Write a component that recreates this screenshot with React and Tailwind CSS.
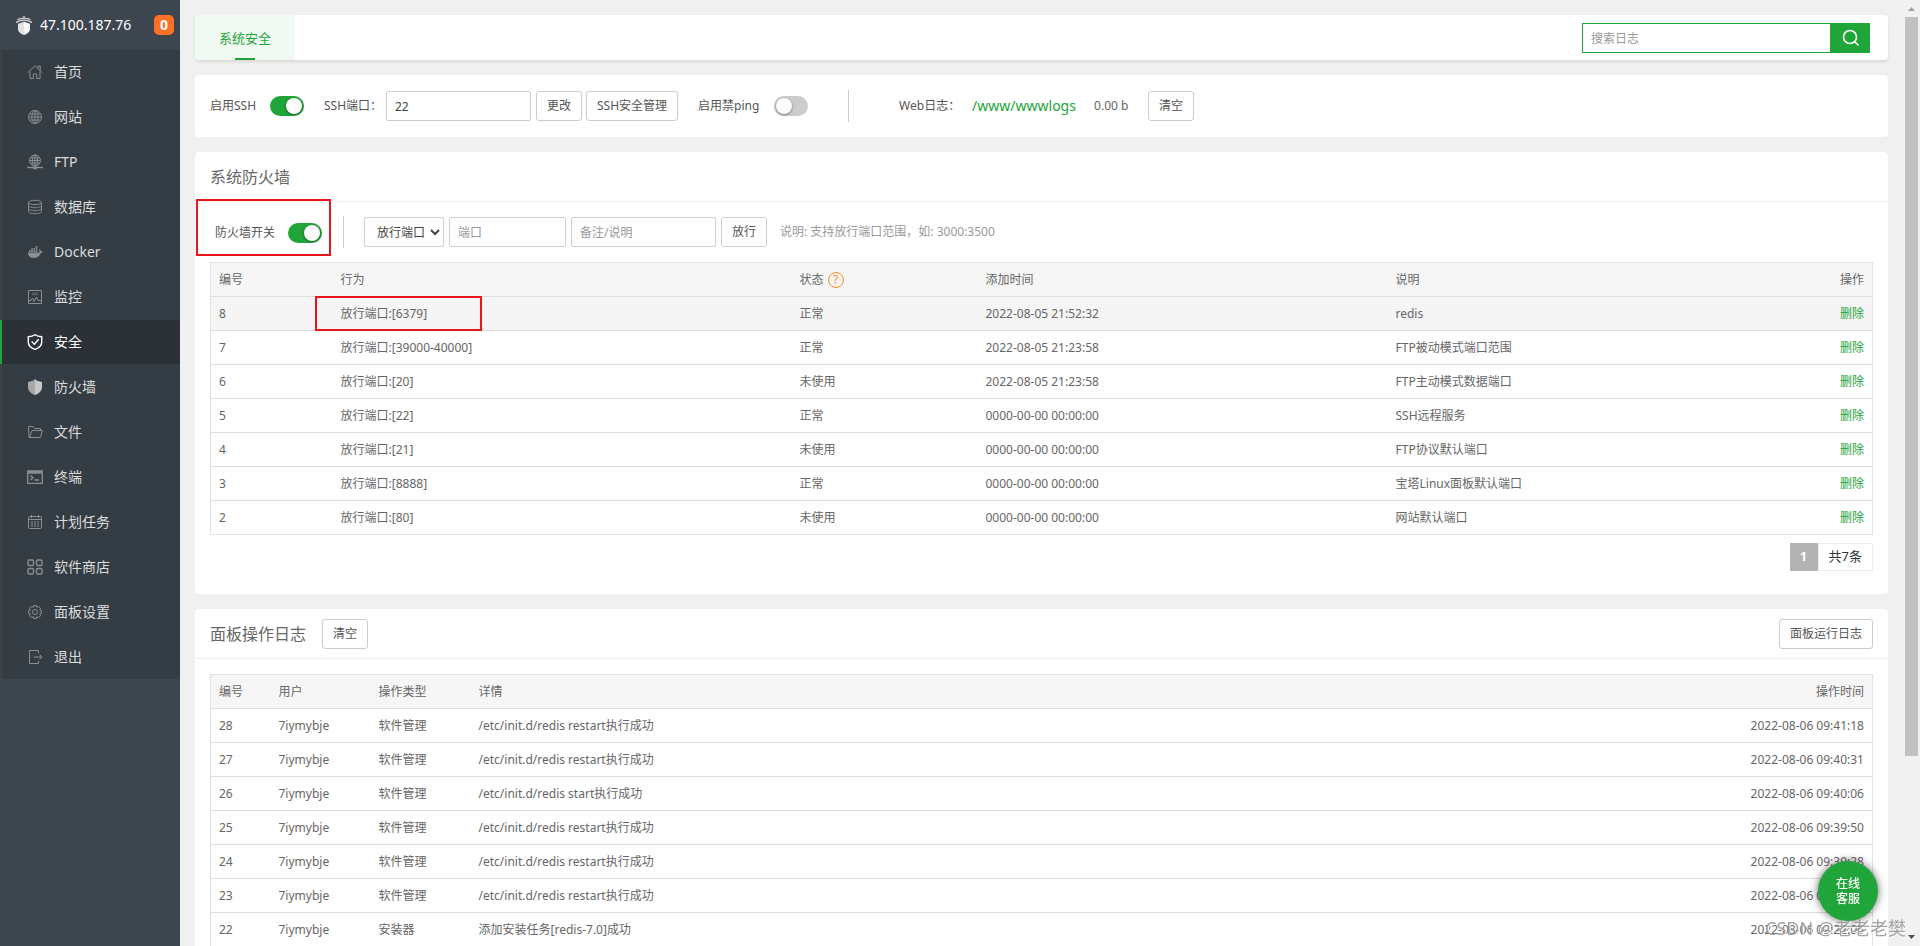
import React, { useState } from "react";
import clsx from "clsx";

const ICONS = {
	home: (
		<g fill="none" stroke="currentColor">
			<path d="M.8 8.700 8 1.800 15.200 8.700M11 4V2H13.200V6.500" />
			<path d="M3 7.500V14.500H6.300V10H9.700V14.500H13V7.500" />
		</g>
	),
	site: (
		<g fill="none" stroke="currentColor">
			<circle cx="8" cy="8" r="6.5" />
			<ellipse cx="8" cy="8" rx="3.2" ry="6.5" />
			<path d="M8 1.500V14.500M1.500 8H14.500M2.500 5H13.500M2.500 11H13.500" />
		</g>
	),
	ftp: (
		<g fill="none" stroke="currentColor">
			<circle cx="8" cy="6.5" r="5.5" />
			<ellipse cx="8" cy="6.5" rx="2.700" ry="5.5" />
			<path d="M8 1V12M2.500 6.500H13.500M3.500 4H12.500M3.500 9H12.500" />
			<path d="M0 13.500H16" strokeWidth="1.400" />
			<path d="M6 14H10" strokeWidth="2.500" />
		</g>
	),
	database: (
		<g fill="none" stroke="currentColor">
			<ellipse cx="8" cy="3.500" rx="6.500" ry="2.200" />
			<path d="M1.500 3.500V12.500C1.500 13.700 4.400 14.700 8 14.700S14.500 13.700 14.500 12.500V3.500" />
			<path d="M1.500 6.500C1.500 7.700 4.400 8.700 8 8.700S14.500 7.700 14.500 6.500M1.500 9.500C1.500 10.700 4.400 11.700 8 11.700S14.500 10.700 14.500 9.500" />
		</g>
	),
	docker: (
		<g fill="currentColor">
			<path d="M1 8.500H12.500C12.800 7.500 12.500 6.800 12 6l.8-.8c.8.6 1.100 1.200 1.200 2 .7-.1 1.500 0 2 .4-.4.9-1.200 1.300-2.200 1.300C12.600 12.300 10.300 14 6.800 14 3 14 .8 12.200 1 8.500Z" />
			<path d="M2 6.300h1.700V8H2zM4.200 6.300h1.700V8H4.200zM6.400 6.300h1.700V8H6.400zM8.600 6.300h1.700V8H8.600zM4.200 4.200h1.700v1.600H4.200zM6.400 4.200h1.700v1.600H6.400zM8.600 4.200h1.700v1.600H8.600zM8.600 2h1.700v1.700H8.600z" />
		</g>
	),
	monitor: (
		<g fill="none" stroke="currentColor">
			<path d="M1.500 1.500H14.500V14.500H1.500Z" />
			<path d="M5 4H11M5 5.500H11" strokeOpacity="0.5" />
			<path d="M2 11.500H4L5.500 9 7 12.500 9.500 8 11 11.500H14" />
		</g>
	),
	safe: (
		<g fill="none" stroke="currentColor" strokeWidth="1.4">
			<path d="M8 .8C6 2.300 3.800 2.700 1.300 2.700V8C1.300 11.800 4 14 8 15.400 12 14 14.700 11.800 14.700 8V2.700C12.200 2.700 10 2.300 8 .8Z" />
			<path d="M4.700 7.500 7.300 10.200 11.700 5.300" />
		</g>
	),
	waf: (
		<>
			<path fill="#a7a8a8" d="M8 0 6 1.800 1 3V8.500C1.200 12 4 14.500 8 16Z" />
			<path fill="#c8c9c9" d="M8 0 10 1.800 15 3V8.500C14.800 12 12 14.500 8 16Z" />
		</>
	),
	files: (
		<g fill="none" stroke="currentColor">
			<path d="M2 13.500 1.500 2.500H6L7.500 4.500H13.500V6" />
			<path d="M2 13.500H13.500L15.300 6.500H5L2.500 13.500" />
		</g>
	),
	terminal: (
		<>
			<path d="M.7 2H15.300V14.300H.7Z" fill="none" stroke="currentColor" strokeWidth="1.300" />
			<path d="M1 2H15V4.700H1Z" fill="currentColor" />
			<path d="M3.500 6.500 6 8.700 3.500 11M7.500 11H12" fill="none" stroke="currentColor" strokeWidth="1.300" />
		</>
	),
	cron: (
		<g fill="none" stroke="currentColor">
			<rect x="1.500" y="2.500" width="13" height="12" rx="1" />
			<path d="M1.500 5.500H14.500M4.500 1V4M11.500 1V4" />
			<path d="M4 8H12M4 10H12M4 12H12" strokeDasharray="2 1" />
		</g>
	),
	store: (
		<g fill="none" stroke="currentColor" strokeWidth="1.400">
			<rect x="1" y="1" width="5.500" height="5.500" rx="1.200" />
			<rect x="9.500" y="1" width="5.500" height="5.500" rx="1.200" />
			<rect x="1" y="9.500" width="5.500" height="5.500" rx="1.200" />
			<rect x="9.500" y="9.500" width="5.500" height="5.500" rx="1.200" />
		</g>
	),
	config: (
		<g fill="none" stroke="currentColor">
			<path d="M6.800 1.500h2.400l.5 1.700 2.100-.7 1.700 1.700-.7 2.100 1.700.5v2.400l-1.700.5.7 2.100-1.700 1.700-2.100-.7-.5 1.700H6.800l-.5-1.700-2.100.7-1.700-1.700.7-2.100-1.700-.5V6.800l1.700-.5-.7-2.100 1.700-1.700 2.100.7Z" />
			<circle cx="8" cy="8" r="2.500" />
		</g>
	),
	exit: (
		<g fill="none" stroke="currentColor">
			<path d="M11.500 4V1.500H2.500V14.500H11.500V12" />
			<path d="M7 8H15M12.500 5.500 15 8 12.500 10.500" />
		</g>
	),
};

const MENU = [
	{ icon: "home", label: "首页" },
	{ icon: "site", label: "网站" },
	{ icon: "ftp", label: "FTP" },
	{ icon: "database", label: "数据库" },
	{ icon: "docker", label: "Docker" },
	{ icon: "monitor", label: "监控" },
	{ icon: "safe", label: "安全", active: true },
	{ icon: "waf", label: "防火墙" },
	{ icon: "files", label: "文件" },
	{ icon: "terminal", label: "终端" },
	{ icon: "cron", label: "计划任务" },
	{ icon: "store", label: "软件商店" },
	{ icon: "config", label: "面板设置" },
	{ icon: "exit", label: "退出" },
];

const RULES = [
	{ id: 8, port: "6379", status: "正常", time: "2022-08-05 21:52:32", ps: "redis", marked: true },
	{ id: 7, port: "39000-40000", status: "正常", time: "2022-08-05 21:23:58", ps: "FTP被动模式端口范围" },
	{ id: 6, port: "20", status: "未使用", time: "2022-08-05 21:23:58", ps: "FTP主动模式数据端口" },
	{ id: 5, port: "22", status: "正常", time: "0000-00-00 00:00:00", ps: "SSH远程服务" },
	{ id: 4, port: "21", status: "未使用", time: "0000-00-00 00:00:00", ps: "FTP协议默认端口" },
	{ id: 3, port: "8888", status: "正常", time: "0000-00-00 00:00:00", ps: "宝塔Linux面板默认端口" },
	{ id: 2, port: "80", status: "未使用", time: "0000-00-00 00:00:00", ps: "网站默认端口" },
];

const LOGS = [
	{ id: 28, type: "软件管理", text: "/etc/init.d/redis restart执行成功", time: "2022-08-06 09:41:18" },
	{ id: 27, type: "软件管理", text: "/etc/init.d/redis restart执行成功", time: "2022-08-06 09:40:31" },
	{ id: 26, type: "软件管理", text: "/etc/init.d/redis start执行成功", time: "2022-08-06 09:40:06" },
	{ id: 25, type: "软件管理", text: "/etc/init.d/redis restart执行成功", time: "2022-08-06 09:39:50" },
	{ id: 24, type: "软件管理", text: "/etc/init.d/redis restart执行成功", time: "2022-08-06 09:39:28" },
	{ id: 23, type: "软件管理", text: "/etc/init.d/redis restart执行成功", time: "2022-08-06 09:39:14" },
	{ id: 22, type: "安装器", text: "添加安装任务[redis-7.0]成功", time: "2022-08-06 09:22:05" },
];

function Sidebar() {
	return (
		<aside className="w-[180px] shrink-0 bg-[#3d454f]">
			<div className="flex h-[50px] items-center pr-1.5 pl-4 text-white">
				<svg className="h-[19px] w-4" viewBox="0 0 16 19">
					<path d="M8 0V2M1.500 3.700C4.500 1.700 11.500 1.700 14.500 3.700M0 6.500C4 3.500 12 3.500 16 6.500" fill="none" stroke="#c5c7c9" strokeWidth="1.600" />
					<path fill="#e2e3e4" d="M8 5.700 2 7.700V14C2.800 16.500 5.500 18.500 8 19Z" />
					<path fill="#f6f6f6" d="M8 5.700 14 7.700V14C13.200 16.500 10.500 18.500 8 19Z" />
				</svg>
				<span className="ml-2 text-sm">47.100.187.76</span>
				<span className="ml-auto flex size-5 items-center justify-center rounded-[5px] bg-[#ff6f26] text-sm font-bold">
					0
				</span>
			</div>
			<nav className="bg-[#353d44]">
				{MENU.map(({ icon, label, active }) => (
					<a
						key={icon}
						href={`#${icon}`}
						className={clsx(
							"mb-px flex h-11 items-center border-l-2 pl-[25px] text-sm",
							active
								? "border-[#20a53a] bg-[#2c3138] text-white"
								: "border-[#444240] text-[#dcdcdc]"
						)}
					>
						<svg
							className={clsx("size-4", active ? "text-white" : "text-[#8b8f92]")}
							viewBox="0 0 16 16"
						>
							{ICONS[icon]}
						</svg>
						<span className="ml-[11px]">{label}</span>
					</a>
				))}
			</nav>
		</aside>
	);
}

function Switch({ id, defaultChecked }) {
	return (
		<input
			id={id}
			type="checkbox"
			role="switch"
			defaultChecked={defaultChecked}
			className="h-5 w-[34px] shrink-0 appearance-none rounded-full bg-[#ccc] p-0.5 before:block before:size-4 before:rounded-full before:bg-[#fcfcfc] before:shadow-[0_1px_3px_rgba(0,0,0,0.4)] checked:bg-[#20a53a] checked:before:ml-auto"
		/>
	);
}

function Button({ className, children }) {
	return (
		<button
			type="button"
			className={clsx(
				"h-[30px] shrink-0 rounded-[3px] border border-[#ccc] bg-white px-2.5 text-xs text-[#555]",
				className
			)}
		>
			{children}
		</button>
	);
}

function TextField({ className, ...props }) {
	return (
		<input
			type="text"
			className={clsx(
				"h-[30px] rounded-xs border border-[#ccc] px-2 text-xs text-[#444] placeholder:text-[#999]",
				className
			)}
			{...props}
		/>
	);
}

function Topbar() {
	return (
		<div className="flex h-[45px] items-center justify-between rounded bg-white pr-[18px] shadow-[0_2px_3px_rgba(0,0,0,0.1)]">
			<a
				href="#safe"
				className="flex h-full w-[100px] flex-col items-center rounded-l bg-[#f1f9f3] text-[13px] text-[#20a53a]"
			>
				<span className="flex flex-1 items-center pt-1">系统安全</span>
				<span className="h-0.5 w-5 bg-[#20a53a]" />
			</a>
			<form className="flex h-[30px]">
				<input
					type="text"
					aria-label="搜索日志"
					placeholder="搜索日志"
					className="w-[249px] border border-[#20a53a] px-2 pt-0.5 text-xs placeholder:text-[#999]"
				/>
				<button
					type="button"
					aria-label="搜索"
					className="flex w-[39px] items-center justify-center bg-[#20a53a] text-white"
				>
					<svg className="size-[18px]" viewBox="0 0 18 18" fill="none" stroke="currentColor" strokeWidth="1.600">
						<circle cx="8" cy="8" r="6.500" />
						<path d="M12.500 12.500 16.500 16.500" />
					</svg>
				</button>
			</form>
		</div>
	);
}

function SshPanel() {
	return (
		<section className="mt-[15px] flex h-[62px] items-center rounded bg-white px-[15px]">
			<label htmlFor="ssh" className="w-[60px]">
				启用SSH
			</label>
			<Switch id="ssh" defaultChecked />
			<label htmlFor="ssh-port" className="ml-5 w-[62px]">
				SSH端口：
			</label>
			<TextField id="ssh-port" defaultValue="22" className="w-[145px]" />
			<Button className="ml-[5px]">更改</Button>
			<Button className="ml-1">SSH安全管理</Button>
			<label htmlFor="ping" className="ml-5 w-[76px]">
				启用禁ping
			</label>
			<Switch id="ping" />
			<span className="ml-10 h-8 w-px bg-[#ccc]" />
			<span className="ml-[50px] w-[73px]">Web日志：</span>
			<a href="#wwwlogs" className="w-[107px] text-sm text-[#20a53a]">
				/www/wwwlogs
			</a>
			<span className="ml-[15px] w-[35px] text-[#666]">0.00 b</span>
			<Button className="ml-[19px]">清空</Button>
		</section>
	);
}

function FirewallPanel() {
	const [page] = useState(1);
	return (
		<section className="mt-[15px] rounded bg-white pb-[23px]">
			<h2 className="flex h-[50px] items-center border-b border-[#eee] px-[15px] text-base text-[#666]">
				系统防火墙
			</h2>
			<div className="flex h-[60px] items-center pl-px">
				<div className="-mt-[3px] flex h-[57px] w-[135px] items-center self-start border-2 border-[#e8151c] pt-[11px] pl-[17px]">
					<label htmlFor="firewall" className="w-[73px]">
						防火墙开关
					</label>
					<Switch id="firewall" defaultChecked />
				</div>
				<span className="ml-3 h-8 w-px bg-[#ccc]" />
				<select
					aria-label="类型"
					className="ml-5 h-[30px] w-20 rounded-xs border border-[#ccc] bg-white pl-2 text-xs text-[#444]"
				>
					<option>放行端口</option>
					<option>屏蔽IP</option>
				</select>
				<TextField aria-label="端口" placeholder="端口" className="ml-[5px] w-[117px]" />
				<TextField aria-label="备注/说明" placeholder="备注/说明" className="ml-[5px] w-[145px]" />
				<Button className="ml-[5px]">放行</Button>
				<span className="ml-[13px] text-[#999]">说明: 支持放行端口范围，如: 3000:3500</span>
			</div>
			<div className="px-[15px]">
				<table className="w-full table-fixed border-collapse border border-[#e3e3e3] text-left text-[#666]">
					<thead>
						<tr className="h-[34px] bg-[#f6f6f6]">
							<th className="w-[122px] px-2 font-normal">编号</th>
							<th className="px-2 font-normal">行为</th>
							<th className="w-[186px] px-2 font-normal">
								<span className="flex items-center gap-1">
									状态
									<a
										href="#help"
										className="flex size-4 items-center justify-center rounded-full border border-[#ff8a1c] text-xs text-[#ff8a1c]"
									>
										?
									</a>
								</span>
							</th>
							<th className="w-[410px] px-2 font-normal">添加时间</th>
							<th className="w-[410px] px-2 font-normal">说明</th>
							<th className="w-[75px] px-2 text-right font-normal">操作</th>
						</tr>
					</thead>
					<tbody>
						{RULES.map((rule) => (
							<tr
								key={rule.id}
								className={clsx("h-[34px] border-t border-[#ddd]", rule.marked && "bg-[#f5f5f5]")}
							>
								<td className="px-2">{rule.id}</td>
								<td className="relative px-2">
									{rule.marked && (
										<span className="absolute -top-px -left-[18px] h-[35px] w-[167px] border-2 border-[#e8151c]" />
									)}
									放行端口:[{rule.port}]
								</td>
								<td className="px-2">{rule.status}</td>
								<td className="px-2">{rule.time}</td>
								<td className="px-2">{rule.ps}</td>
								<td className="px-2 text-right">
									<a href="#del" className="text-[#20a53a]">
										删除
									</a>
								</td>
							</tr>
						))}
					</tbody>
				</table>
				<div className="mt-2 flex justify-end text-[13px] text-[#333]">
					<span className="flex size-7 items-center justify-center bg-[#b3b3b3] font-bold text-white">
						{page}
					</span>
					<span className="flex h-7 items-center border border-[#ececec] px-2.5">
						共{RULES.length}条
					</span>
				</div>
			</div>
		</section>
	);
}

function LogPanel() {
	return (
		<section className="mt-[15px] rounded bg-white">
			<div className="flex h-[50px] items-center border-b border-[#eee] px-[15px]">
				<h2 className="text-base text-[#666]">面板操作日志</h2>
				<Button className="ml-4">清空</Button>
				<Button className="ml-auto">面板运行日志</Button>
			</div>
			<div className="p-[15px]">
				<table className="w-full table-fixed border-collapse border border-[#e3e3e3] text-left text-[#666]">
					<thead>
						<tr className="h-[34px] bg-[#f6f6f6]">
							<th className="w-[60px] px-2 font-normal">编号</th>
							<th className="w-[100px] px-2 font-normal">用户</th>
							<th className="w-[100px] px-2 font-normal">操作类型</th>
							<th className="px-2 font-normal">详情</th>
							<th className="w-[160px] px-2 text-right font-normal">操作时间</th>
						</tr>
					</thead>
					<tbody>
						{LOGS.map((log) => (
							<tr key={log.id} className="h-[34px] border-t border-[#ddd]">
								<td className="px-2">{log.id}</td>
								<td className="px-2">7iymybje</td>
								<td className="px-2">{log.type}</td>
								<td className="px-2">{log.text}</td>
								<td className="px-2 text-right">{log.time}</td>
							</tr>
						))}
					</tbody>
				</table>
			</div>
		</section>
	);
}

// classic page scrollbar: arrow, thumb, arrow
function Scrollbar() {
	return (
		<div className="flex w-[17px] shrink-0 flex-col items-center bg-[#f1f1f1]">
			<svg className="h-[17px] w-[17px]" viewBox="0 0 17 17">
				<path d="M5 11H12L8.500 7Z" fill="#a3a3a3" />
			</svg>
			<div className="flex w-full flex-1 flex-col px-0.5">
				<span className="h-[81%] bg-[#c1c1c1]" />
			</div>
			<svg className="h-[17px] w-[17px]" viewBox="0 0 17 17">
				<path d="M5 6H12L8.500 10Z" fill="#505050" />
			</svg>
		</div>
	);
}

export default function App() {
	return (
		<div className="flex h-screen overflow-hidden bg-[#f0f0f0] font-['Noto_Sans','Noto_Sans_CJK_SC',sans-serif] text-xs text-[#555]">
			<Sidebar />
			<main className="min-w-0 flex-1 overflow-hidden p-[15px]">
				<Topbar />
				<SshPanel />
				<FirewallPanel />
				<LogPanel />
			</main>
			<Scrollbar />
			<button
				type="button"
				className="fixed right-[42px] bottom-[25px] size-[60px] rounded-full bg-[#20a53a] px-4 text-xs leading-[15px] font-medium text-white shadow-[0_0_8px_rgba(0,0,0,0.6)]"
			>
				在线 客服
			</button>
			<span className="pointer-events-none fixed right-3.5 bottom-1.5 text-lg leading-6 text-[#8c8c8c]/80 [text-shadow:1px_1px_1px_#fff]">
				CSDN @老老老樊
			</span>
		</div>
	);
}
